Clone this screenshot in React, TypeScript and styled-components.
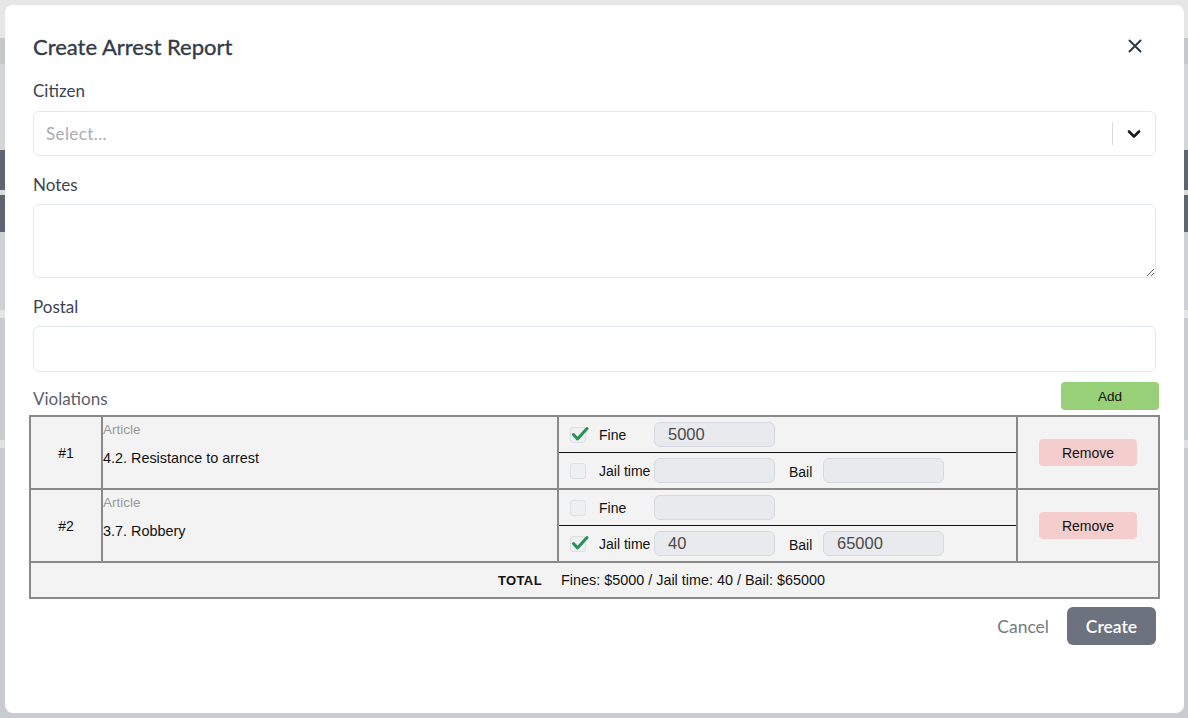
import React from 'react'
import styled, { createGlobalStyle } from 'styled-components'

const GlobalStyle = createGlobalStyle`
  html, body {
    margin: 0;
    padding: 0;
  }
  body {
    width: 1188px;
    height: 718px;
    overflow: hidden;
    background: linear-gradient(
      to bottom,
      #e6e6e6 0px, #e6e6e6 38px,
      #c5c7cb 38px, #c5c7cb 64px,
      #d3d5d8 64px, #d3d5d8 150px,
      #5f656e 150px, #5f656e 190px,
      #d9dadc 190px, #d9dadc 195px,
      #5f656e 195px, #5f656e 232px,
      #cdd0d4 232px, #cdd0d4 310px,
      #e4e5e6 310px, #e4e5e6 318px,
      #c8cbcf 318px, #c8cbcf 440px,
      #e0e1e3 440px, #e0e1e3 448px,
      #c8cbcf 448px, #c8cbcf 718px
    );
    font-family: Lato, "Open Sans", sans-serif;
  }
`

type Violation = {
  id: number
  article: string
  fineOn: boolean
  fine: string
  jailOn: boolean
  jail: string
  bail: string
}

const violations: Violation[] = [
  { id: 1, article: '4.2. Resistance to arrest', fineOn: true, fine: '5000', jailOn: false, jail: '', bail: '' },
  { id: 2, article: '3.7. Robbery', fineOn: false, fine: '', jailOn: true, jail: '40', bail: '65000' },
]

const CheckBox: React.FC<{ checked: boolean }> = ({ checked }) => (
  <StyledCheck>
    {checked && (
      <svg width='18' height='16' viewBox='0 0 18 16'>
        <path d='M2.5 8.5 L6.5 13 L16 2.5' fill='none' stroke='#2a9156' strokeWidth='3' strokeLinecap='round' strokeLinejoin='round' />
      </svg>
    )}
  </StyledCheck>
)

const App: React.FC = () => (
  <>
    <GlobalStyle />
    <StyledModal>
      <StyledHeader>
        <StyledTitle>Create Arrest Report</StyledTitle>
        <StyledClose aria-label='Close'>
          <svg width='14' height='14' viewBox='0 0 14 14'>
            <path d='M1.5 1.5 L12.5 12.5 M12.5 1.5 L1.5 12.5' stroke='#2d3748' strokeWidth='2' strokeLinecap='round' />
          </svg>
        </StyledClose>
      </StyledHeader>

      <StyledLabel>Citizen</StyledLabel>
      <StyledSelect>
        <StyledPlaceholder>Select...</StyledPlaceholder>
        <StyledSeparator />
        <StyledChevron>
          <svg width='14' height='10' viewBox='0 0 14 10'>
            <path d='M2 2.5 L7 7.5 L12 2.5' fill='none' stroke='#1a1a1a' strokeWidth='2.6' strokeLinecap='round' strokeLinejoin='round' />
          </svg>
        </StyledChevron>
      </StyledSelect>

      <StyledLabel $top={17}>Notes</StyledLabel>
      <StyledTextarea />

      <StyledLabel $top={17}>Postal</StyledLabel>
      <StyledInput />

      <StyledViolationsBar>
        <StyledSubLabel>Violations</StyledSubLabel>
        <StyledAddButton>Add</StyledAddButton>
      </StyledViolationsBar>

      <StyledTable>
        <colgroup>
          <col style={{ width: 72 }} />
          <col style={{ width: 456 }} />
          <col style={{ width: 459 }} />
          <col style={{ width: 142 }} />
        </colgroup>
        <tbody>
          {violations.map((v) => (
            <tr key={v.id}>
              <StyledNumCell>#{v.id}</StyledNumCell>
              <StyledArticleCell>
                <StyledArticleLabel>Article</StyledArticleLabel>
                <StyledArticleText>{v.article}</StyledArticleText>
              </StyledArticleCell>
              <StyledPenaltyCell>
                <StyledPenaltyRow>
                  <CheckBox checked={v.fineOn} />
                  <StyledFieldLabel>Fine</StyledFieldLabel>
                  <StyledValueBox>{v.fine}</StyledValueBox>
                </StyledPenaltyRow>
                <StyledPenaltyRow $divider>
                  <CheckBox checked={v.jailOn} />
                  <StyledFieldLabel>Jail time</StyledFieldLabel>
                  <StyledValueBox>{v.jail}</StyledValueBox>
                  <StyledBailLabel>Bail</StyledBailLabel>
                  <StyledValueBox>{v.bail}</StyledValueBox>
                </StyledPenaltyRow>
              </StyledPenaltyCell>
              <StyledActionCell>
                <StyledRemoveButton>Remove</StyledRemoveButton>
              </StyledActionCell>
            </tr>
          ))}
          <tr>
            <StyledTotalLabelCell colSpan={2}>TOTAL</StyledTotalLabelCell>
            <StyledTotalValueCell colSpan={2}>Fines: $5000 / Jail time: 40 / Bail: $65000</StyledTotalValueCell>
          </tr>
        </tbody>
      </StyledTable>

      <StyledFooter>
        <StyledCancel>Cancel</StyledCancel>
        <StyledCreate>Create</StyledCreate>
      </StyledFooter>
    </StyledModal>
  </>
)

const StyledModal = styled.div`
  box-sizing: border-box;
  width: 1179px;
  height: 708px;
  margin: 5px 0 0 5px;
  padding: 28px 28px 0 28px;
  background: #fff;
  border-radius: 8px;
  display: flex;
  flex-direction: column;
`

const StyledHeader = styled.div`
  display: flex;
  align-items: center;
  justify-content: space-between;
  height: 28px;
`

const StyledTitle = styled.h2`
  margin: 0;
  font-size: 22px;
  line-height: 28px;
  font-weight: 400;
  color: #333a47;
  -webkit-text-stroke: 0.35px #333a47;
`

const StyledClose = styled.button`
  border: 0;
  background: none;
  padding: 0;
  margin-right: 14px;
  margin-top: -2px;
  display: flex;
  cursor: pointer;
`

const StyledLabel = styled.label<{ $top?: number }>`
  display: block;
  margin-top: ${(p) => p.$top ?? 18}px;
  font-size: 17px;
  line-height: 24px;
  color: #3d4451;
`

const StyledSelect = styled.div`
  box-sizing: border-box;
  margin-top: 8px;
  height: 45px;
  border: 1px solid #e2e8f0;
  border-radius: 6px;
  display: flex;
  align-items: center;
  padding-left: 12px;
`

const StyledPlaceholder = styled.span`
  flex: 1;
  font-size: 17px;
  letter-spacing: 0.4px;
  color: #a9adb3;
`

const StyledSeparator = styled.span`
  width: 1px;
  height: 23px;
  background: #d9dcdf;
`

const StyledChevron = styled.span`
  width: 42px;
  display: flex;
  justify-content: center;
`

const StyledTextarea = styled.textarea`
  box-sizing: border-box;
  margin-top: 7px;
  height: 74px;
  width: 100%;
  border: 1px solid #e2e8f0;
  border-radius: 6px;
  resize: vertical;
  font-family: inherit;
`

const StyledInput = styled.input`
  box-sizing: border-box;
  margin-top: 7px;
  height: 46px;
  width: 100%;
  border: 1px solid #e2e8f0;
  border-radius: 6px;
`

const StyledViolationsBar = styled.div`
  margin-top: 10px;
  margin-right: -3px;
  display: flex;
  align-items: flex-end;
  justify-content: space-between;
`

const StyledSubLabel = styled.span`
  font-size: 17px;
  line-height: 22px;
  color: #5b616a;
`

const StyledAddButton = styled.button`
  width: 98px;
  height: 28px;
  border: 0;
  border-radius: 4px;
  background: #98d077;
  font-family: "Liberation Sans", Arial, sans-serif;
  font-size: 13.5px;
  color: #111;
  padding: 0;
`

const StyledTable = styled.table`
  margin: 5px -2px 0 -4px;
  width: 1129px;
  table-layout: fixed;
  border-collapse: collapse;
  background: #f3f3f3;
  border: 2px solid #8a8a8a;
  font-family: "Liberation Sans", Arial, sans-serif;
  font-size: 14px;
  color: #111;

  td {
    border: 2px solid #8a8a8a;
    padding: 0;
  }
`

const StyledNumCell = styled.td`
  height: 69px;
  text-align: center;
  vertical-align: middle;
  font-size: 14px;
`

const StyledArticleCell = styled.td`
  vertical-align: top;
`

const StyledArticleLabel = styled.div`
  margin-top: 5px;
  font-size: 13.5px;
  line-height: 16px;
  color: #999;
`

const StyledArticleText = styled.div`
  margin-top: 11px;
  font-size: 14.4px;
  line-height: 18px;
`

const StyledPenaltyCell = styled.td`
  vertical-align: top;
`

const StyledPenaltyRow = styled.div<{ $divider?: boolean }>`
  height: 35px;
  display: flex;
  align-items: center;
  padding-left: 11px;
  border-top: ${(p) => (p.$divider ? '1px solid #111' : 'none')};
`

const StyledCheck = styled.span`
  box-sizing: border-box;
  width: 16px;
  height: 16px;
  border: 1px solid #dcdfe3;
  border-radius: 3px;
  background: #eef0f2;
  margin-right: 13px;
  position: relative;
  display: inline-block;

  svg {
    position: absolute;
    left: 0;
    top: -2px;
  }
`

const StyledFieldLabel = styled.span`
  width: 55px;
  font-size: 14px;
`

const StyledBailLabel = styled.span`
  margin: 2px 8px 0 14px;
  width: 26px;
  font-size: 14px;
`

const StyledValueBox = styled.span`
  box-sizing: border-box;
  width: 121px;
  height: 25px;
  border: 1px solid #d6dae0;
  border-radius: 6px;
  background: #e8eaed;
  padding-left: 13px;
  font-size: 16.5px;
  line-height: 23px;
  color: #4a4a4a;
`

const StyledActionCell = styled.td`
  text-align: center;
  vertical-align: middle;
`

const StyledRemoveButton = styled.button`
  width: 98px;
  height: 27px;
  border: 0;
  border-radius: 4px;
  background: #f6cdcd;
  font-family: "Liberation Sans", Arial, sans-serif;
  font-size: 14px;
  color: #111;
  padding: 0;
`

const StyledTotalLabelCell = styled.td`
  height: 34px;
  text-align: right;
  padding-right: 16px !important;
  font-size: 13px;
  font-weight: 700;
  letter-spacing: 0.4px;
  border-right: hidden !important;
`

const StyledTotalValueCell = styled.td`
  padding-left: 3px !important;
  font-size: 14.4px;
  border-left: hidden !important;
`

const StyledFooter = styled.div`
  margin-top: 8px;
  display: flex;
  justify-content: flex-end;
  align-items: center;
  gap: 18px;
`

const StyledCancel = styled.button`
  border: 0;
  background: none;
  padding: 0;
  font-family: inherit;
  font-size: 17.5px;
  color: #737a84;
`

const StyledCreate = styled.button`
  width: 89px;
  height: 38px;
  border: 0;
  border-radius: 6px;
  background: #6c727e;
  color: #fff;
  font-family: inherit;
  font-size: 17.5px;
  font-weight: 600;
  padding: 0;
`

export default App
